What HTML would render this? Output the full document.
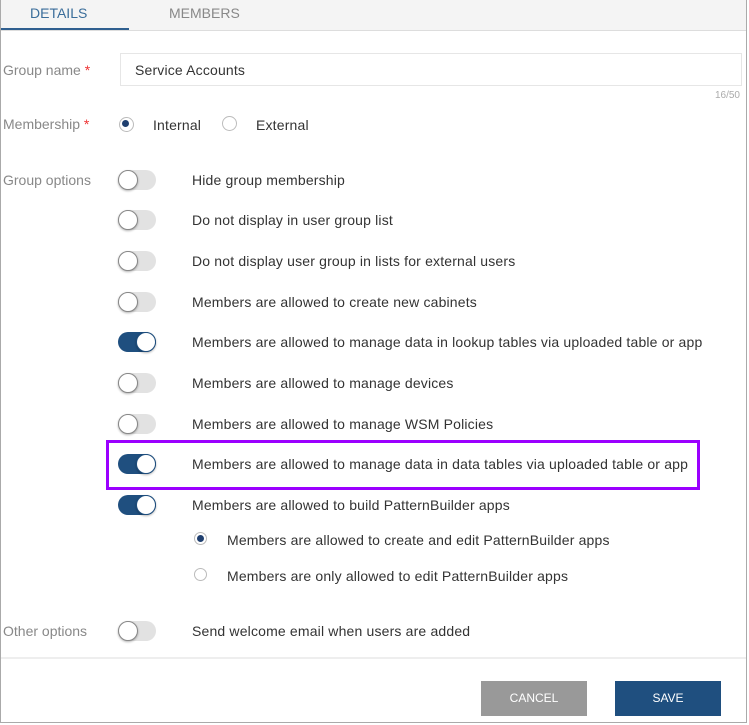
<!DOCTYPE html>
<html><head><style>
body{margin:0;width:749px;height:725px;background:#fff;font-family:"Liberation Sans",sans-serif;position:relative;overflow:hidden;color:#333}
.a{position:absolute}
.frame{left:0;top:0;width:745px;height:722px;border:1px solid #aaa;border-top:none}
.tabs{left:1px;top:0;width:745px;height:30px;background:#f4f4f4;border-bottom:1px solid #ddd}
.lbl{font-size:14px;color:#888}
.t{font-size:14px;color:#333;white-space:nowrap;letter-spacing:.17px}
.tg{width:38px;height:20px;border-radius:10px;background:#e2e2e2}
.tg::after{content:"";position:absolute;left:0;top:0;width:18px;height:18px;border-radius:50%;background:#fff;border:1px solid #888;box-shadow:0 1px 2px rgba(0,0,0,.3)}
.tg.on{background:#1f4f7f}
.tg.on::after{left:18px;border-color:#1f4f7f}
.rd{width:13px;height:13px;border-radius:50%;border:1px solid #bbb;background:#fff;box-sizing:border-box}
.rd.on::after{content:"";position:absolute;left:2px;top:2px;width:7px;height:7px;border-radius:50%;background:#1f3f6f}
.req{color:#e33}
</style></head><body>
<div class="a frame"></div>
<div class="a tabs"></div>
<div class="a" style="left:30px;top:5px;font-size:14px;color:#3a6d9a">DETAILS</div>
<div class="a" style="left:169px;top:5px;font-size:14px;color:#888">MEMBERS</div>
<div class="a" style="left:1px;top:28px;width:128px;height:2px;background:#2f5f8f"></div>

<div class="a lbl" style="left:3px;top:62px">Group name <span class="req">*</span></div>
<div class="a" style="left:120px;top:53px;width:620px;height:31px;border:1px solid #e6e6e6"></div>
<div class="a t" style="left:135px;top:62px">Service Accounts</div>
<div class="a" style="right:9px;top:90px;font-size:10px;color:#aaa">16/50</div>

<div class="a lbl" style="left:3px;top:116px">Membership <span class="req">*</span></div>
<div class="a rd on" style="left:119px;top:117px;width:15px;height:15px"></div>
<div class="a t" style="left:153px;top:117px">Internal</div>
<div class="a rd" style="left:222px;top:116px;width:15px;height:15px"></div>
<div class="a t" style="left:256px;top:117px">External</div>

<div class="a lbl" style="left:3px;top:172px">Group options</div>
<div class="a tg" style="left:118px;top:170px"></div><div class="a t" style="left:192px;top:172px">Hide group membership</div>
<div class="a tg" style="left:118px;top:210px"></div><div class="a t" style="left:192px;top:212px">Do not display in user group list</div>
<div class="a tg" style="left:118px;top:251px"></div><div class="a t" style="left:192px;top:253px">Do not display user group in lists for external users</div>
<div class="a tg" style="left:118px;top:292px"></div><div class="a t" style="left:192px;top:294px">Members are allowed to create new cabinets</div>
<div class="a tg on" style="left:118px;top:332px"></div><div class="a t" style="left:192px;top:334px">Members are allowed to manage data in lookup tables via uploaded table or app</div>
<div class="a tg" style="left:118px;top:373px"></div><div class="a t" style="left:192px;top:375px">Members are allowed to manage devices</div>
<div class="a tg" style="left:118px;top:414px"></div><div class="a t" style="left:192px;top:416px">Members are allowed to manage WSM Policies</div>
<div class="a tg on" style="left:118px;top:454px"></div><div class="a t" style="left:192px;top:456px">Members are allowed to manage data in data tables via uploaded table or app</div>
<div class="a" style="left:106px;top:440px;width:588px;height:44px;border:3px solid #9b00ff"></div>
<div class="a tg on" style="left:118px;top:495px"></div><div class="a t" style="left:192px;top:497px">Members are allowed to build PatternBuilder apps</div>
<div class="a rd on" style="left:194px;top:532px"></div><div class="a t" style="left:227px;top:532px">Members are allowed to create and edit PatternBuilder apps</div>
<div class="a rd" style="left:194px;top:568px"></div><div class="a t" style="left:227px;top:568px">Members are only allowed to edit PatternBuilder apps</div>

<div class="a lbl" style="left:3px;top:623px">Other options</div>
<div class="a tg" style="left:118px;top:621px"></div><div class="a t" style="left:192px;top:623px">Send welcome email when users are added</div>

<div class="a" style="left:1px;top:657px;width:745px;height:2px;background:#eee"></div>
<div class="a" style="left:481px;top:681px;width:106px;height:35px;background:#999;color:#fff;font-size:12px;text-align:center;line-height:35px">CANCEL</div>
<div class="a" style="left:615px;top:681px;width:106px;height:35px;background:#1f4f7f;color:#fff;font-size:12px;text-align:center;line-height:35px">SAVE</div>
</body></html>
